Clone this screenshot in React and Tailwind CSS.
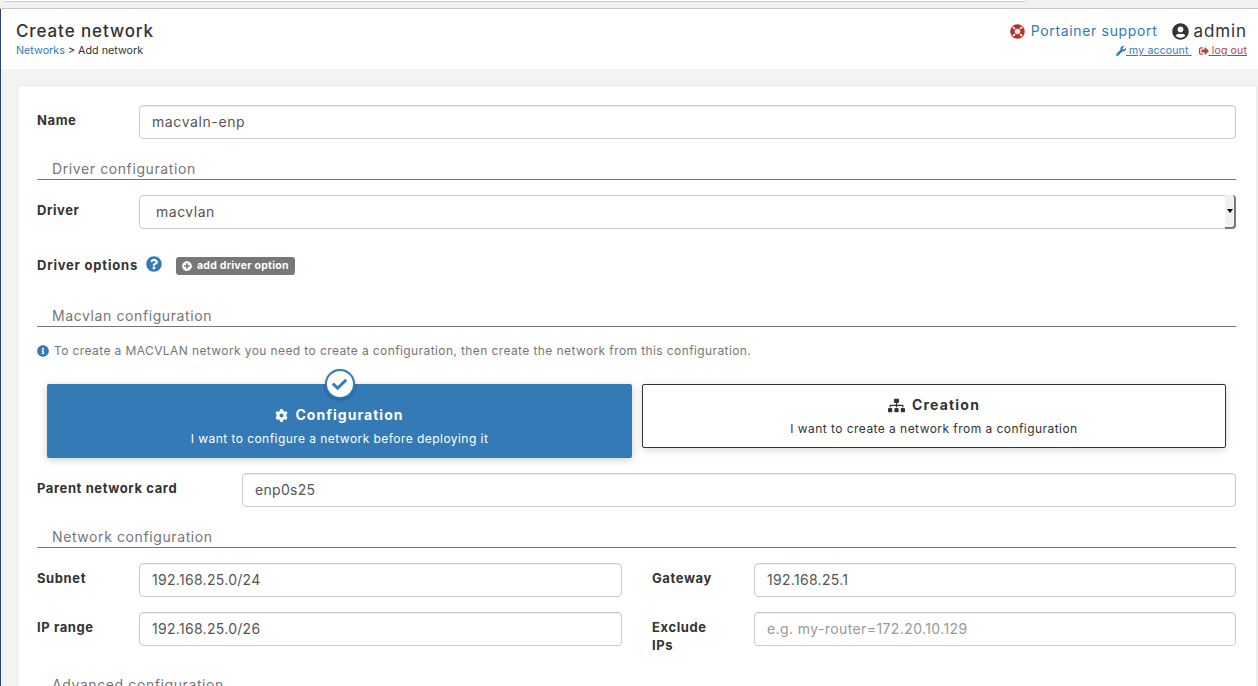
import { FaLifeRing, FaUserCircle, FaWrench, FaSignOutAlt, FaQuestionCircle, FaPlusCircle, FaInfoCircle, FaCog, FaSitemap, FaCheck } from 'react-icons/fa'

const FONT = 'font-["Inter","Noto_Sans",sans-serif]'

function Field({ value, placeholder, className = 'flex-1 tracking-[0.3px]' }) {
  return (
    <input
      readOnly
      value={value ?? ''}
      placeholder={placeholder}
      className={`block h-[34px] min-w-0 rounded border border-[#cccccc] bg-white px-3 pb-[2px] text-[14px] text-[#555555] placeholder:text-[#999999] outline-none shadow-[inset_0_1px_1px_rgba(0,0,0,0.075)] ${className}`}
    />
  )
}

function Label({ children, className = 'w-[102px]' }) {
  return <label className={`shrink-0 pt-[6px] text-[13px] font-bold leading-[18px] tracking-[0.6px] text-[#333333] ${className}`}>{children}</label>
}

function SectionTitle({ children, className = '' }) {
  return (
    <div className={`h-[20px] border-b border-[#777777] pl-[15px] text-[14px] leading-[18px] tracking-[0.6px] text-[#767676] ${className}`}>
      {children}
    </div>
  )
}

export default function App() {
  return (
    <div className={`${FONT} h-[686px] w-[1258px] overflow-hidden bg-[#f3f3f3]`}>
      {/* browser strip */}
      <div className="flex h-[9px] border-b border-[#c9c7c3] bg-[#f2f1f0]">
        <div className="ml-[3px] h-[2px] w-[1024px] rounded-b border-b border-r border-[#cfcdc9] bg-white" />
      </div>

      <div className="h-[677px] overflow-hidden border-l border-[#2d4373]">
        {/* header */}
        <div className="flex h-[60px] justify-between bg-white pl-[15px] pr-[11px]">
          <div className="pt-[12px]">
            <div className="text-[17px] font-medium leading-[20px] tracking-[0.9px] text-[#333333]">Create network</div>
            <div className="mt-[2px] text-[10.75px] leading-[16px] text-[#333333]">
              <a className="text-[#337ab7]">Networks</a> &gt; Add network
            </div>
          </div>
          <div className="flex flex-col items-end pt-[12px]">
            <div className="flex items-center text-[#337ab7]">
              <FaLifeRing className="mr-[6px] text-[15px] text-[#c12e2a]" />
              <span className="text-[14px] leading-[20px] tracking-[0.66px]">Portainer support</span>
              <FaUserCircle className="ml-[15px] mr-[4px] text-[17px] text-[#333333]" />
              <span className="text-[17px] leading-[20px] tracking-[0.9px] text-[#333333]">admin</span>
            </div>
            <div className="mt-[2px] flex items-center text-[10.5px] leading-[16px] tracking-[0.15px]">
              <a className="flex items-center text-[#337ab7] underline">
                <FaWrench className="text-[10px]" /><span className="whitespace-pre"> my account </span>
              </a>
              <a className="ml-[7px] flex items-center text-[#b5403c] underline">
                <FaSignOutAlt className="text-[10px]" /><span className="whitespace-pre"> log out</span>
              </a>
            </div>
          </div>
        </div>

        {/* form card */}
        <div className="ml-[16px] mr-[1px] mt-[16px] h-[620px] border border-[#e8e8e8] bg-white pl-[19px] pr-[20px] pt-[19px]">
          <div className="flex">
            <Label>Name</Label>
            <Field value="macvaln-enp" className="flex-1 tracking-[0.6px]" />
          </div>

          <SectionTitle className="mt-[21px]">Driver configuration</SectionTitle>

          <div className="mt-[15px] flex">
            <Label>Driver</Label>
            <div className="relative flex h-[34px] flex-1 items-center rounded border border-[#cccccc] bg-white pb-[2px] pl-[16px] text-[14px] tracking-[0.5px] text-[#555555]">
              macvlan
              <div className="absolute bottom-[-1px] right-[-1px] top-[-1px] flex w-[11px] items-center justify-center rounded-r border-b-2 border-r-2 border-[#777777] bg-[#f2f1f0]">
                <div className="h-0 w-0 border-x-[3px] border-t-[4px] border-x-transparent border-t-black" />
              </div>
            </div>
          </div>

          <div className="mt-[27px] flex h-[19px] items-center">
            <span className="text-[13px] font-bold tracking-[0.8px] text-[#333333]">Driver options</span>
            <FaQuestionCircle className="mb-[3px] ml-[8px] text-[16px] text-[#337ab7]" />
            <span className="ml-[14px] mt-[1px] flex h-[18px] items-center rounded-[3px] bg-[#777777] px-[6px] text-[10.5px] font-bold tracking-[0.25px] text-white">
              <FaPlusCircle className="mr-[5px] text-[10px]" />add driver option
            </span>
          </div>

          <SectionTitle className="mt-[32px]">Macvlan configuration</SectionTitle>

          <div className="mt-[15px] flex h-[18px] items-center text-[12px] tracking-[0.4px] text-[#767676]">
            <FaInfoCircle className="mr-[5px] text-[12px] text-[#337ab7]" />
            To create a MACVLAN network you need to create a configuration, then create the network from this configuration.
          </div>

          {/* mode selector */}
          <div className="mt-[24px] flex items-start gap-[10px] px-[10px]">
            <div className="relative flex h-[74px] w-[585px] shrink-0 flex-col items-center rounded-[2px] bg-[#337ab7] pt-[22px] text-white shadow-[0_2px_8px_rgba(0,0,0,0.2)]">
              <div className="absolute left-1/2 top-[-15px] flex h-[30px] w-[30px] -translate-x-1/2 items-center justify-center rounded-full border-2 border-[#337ab7] bg-white shadow-[0_1px_3px_rgba(0,0,0,0.3)]">
                <FaCheck className="text-[15px] text-[#337ab7]" />
              </div>
              <div className="flex items-center text-[14px] font-bold leading-[18px] tracking-[1.05px]">
                <FaCog className="mr-[7px] text-[13px]" />Configuration
              </div>
              <div className="mt-[6px] text-[12px] leading-[18px] tracking-[0.45px]">I want to configure a network before deploying it</div>
            </div>
            <div className="flex h-[64px] flex-1 flex-col items-center rounded-[2px] border border-[#333333] bg-white pt-[11px] text-[#333333] shadow-[0_2px_8px_rgba(0,0,0,0.15)]">
              <div className="flex items-center text-[14px] font-bold leading-[18px] tracking-[1.2px]">
                <FaSitemap className="mr-[7px] text-[17px]" />Creation
              </div>
              <div className="mt-[6px] text-[12px] leading-[18px] tracking-[0.45px]">I want to create a network from a configuration</div>
            </div>
          </div>

          <div className="mt-[15px] flex">
            <Label className="w-[205px]">Parent network card</Label>
            <Field value="enp0s25" />
          </div>

          <SectionTitle className="mt-[21px]">Network configuration</SectionTitle>

          <div className="mt-[15px] flex">
            <Label>Subnet</Label>
            <Field value="192.168.25.0/24" className="w-[483px] shrink-0 tracking-[0.3px]" />
            <Label className="ml-[30px] w-[102px]">Gateway</Label>
            <Field value="192.168.25.1" />
          </div>

          <div className="mt-[15px] flex">
            <Label>IP range</Label>
            <Field value="192.168.25.0/26" className="w-[483px] shrink-0 tracking-[0.3px]" />
            <Label className="ml-[30px] w-[102px]">Exclude<br />IPs</Label>
            <Field placeholder="e.g. my-router=172.20.10.129" className="flex-1 tracking-[0.4px]" />
          </div>

          <SectionTitle className="mt-[22px]">Advanced configuration</SectionTitle>
        </div>
      </div>
    </div>
  )
}
